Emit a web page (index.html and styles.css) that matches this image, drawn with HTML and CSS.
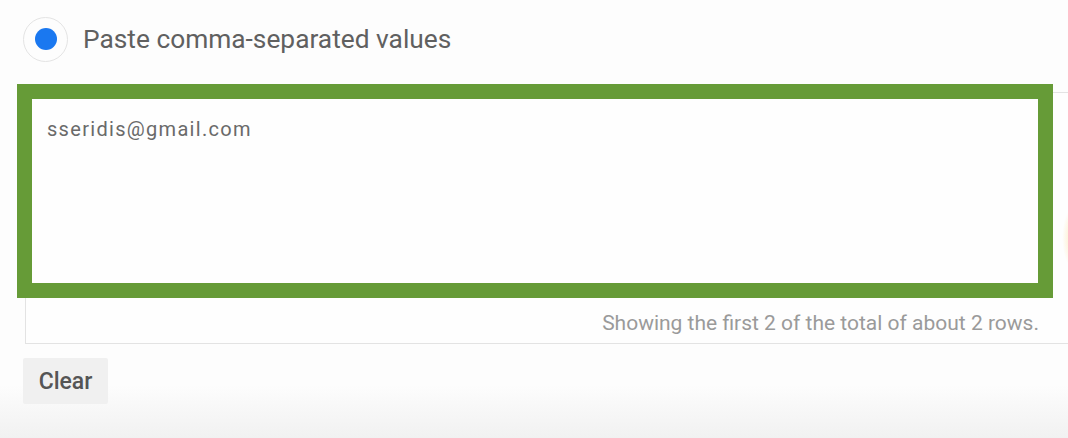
FILE: index.html
```html
<!DOCTYPE html>
<html>
<head>
<meta charset="utf-8">
<link rel="stylesheet" href="styles.css">
</head>
<body>
<div class="page">
  <label class="radio-row">
    <span class="radio"><span class="radio-dot"></span></span>
    <span class="radio-label">Paste comma-separated values</span>
  </label>
  <div class="panel">
    <div class="textarea">sseridis@gmail.com</div>
    <div class="panel-footer">Showing the first 2 of the total of about 2 rows.</div>
    <div class="highlight"></div>
    <div class="glow"></div>
  </div>
  <div class="actions">
    <button class="btn">Clear</button>
  </div>
</div>
</body>
</html>
```
FILE: styles.css
```css
html, body {
  margin: 0;
  padding: 0;
}
body {
  width: 1068px;
  height: 438px;
  overflow: hidden;
  font-family: Roboto, "Liberation Sans", sans-serif;
  background: linear-gradient(to bottom, #fdfdfd 0, #fdfdfd 385px, #f1f1f1 438px);
}
.page {
  display: flex;
  flex-direction: column;
}
.radio-row {
  display: flex;
  align-items: center;
  gap: 15px;
  padding: 16px 0 0 23px;
  height: 46px;
}
.radio {
  box-sizing: border-box;
  width: 45px;
  height: 45px;
  border-radius: 50%;
  border: 1px solid #e4e4e4;
  display: flex;
  align-items: center;
  justify-content: center;
}
.radio-dot {
  width: 22px;
  height: 22px;
  border-radius: 50%;
  background: #1a78f0;
}
.radio-label {
  font-size: 26.3px;
  color: #606060;
}
.panel {
  position: relative;
  margin: 30px 0 0 25px;
  width: 1060px;
  border: 1px solid #e3e3e3;
  border-right: none;
  background: #fefefe;
}
.textarea {
  box-sizing: border-box;
  height: 207px;
  padding: 24px 0 0 21px;
  font-size: 20px;
  line-height: 24px;
  letter-spacing: 1.3px;
  color: #6a6a6a;
}
.panel-footer {
  height: 43px;
  box-sizing: border-box;
  padding: 11px 47px 0 0;
  text-align: right;
  font-size: 21px;
  line-height: 24px;
  color: #9a9a9a;
}
.highlight {
  position: absolute;
  left: -9px;
  top: -9px;
  width: 1036px;
  height: 214px;
  box-sizing: border-box;
  border: 15px solid #669b37;
}
.glow {
  position: absolute;
  left: 1036px;
  top: 110px;
  width: 16px;
  height: 70px;
  border-radius: 50%;
  background: radial-gradient(ellipse at right, rgba(250, 200, 90, 0.55), rgba(250, 200, 90, 0) 70%);
}
.actions {
  padding: 14px 0 0 23px;
}
.btn {
  width: 85px;
  height: 46px;
  border: none;
  border-radius: 2px;
  background: #f0f0f0;
  font-family: Roboto, "Liberation Sans", sans-serif;
  font-size: 23px;
  font-weight: 500;
  color: #555;
  padding: 0;
  cursor: pointer;
}
```
